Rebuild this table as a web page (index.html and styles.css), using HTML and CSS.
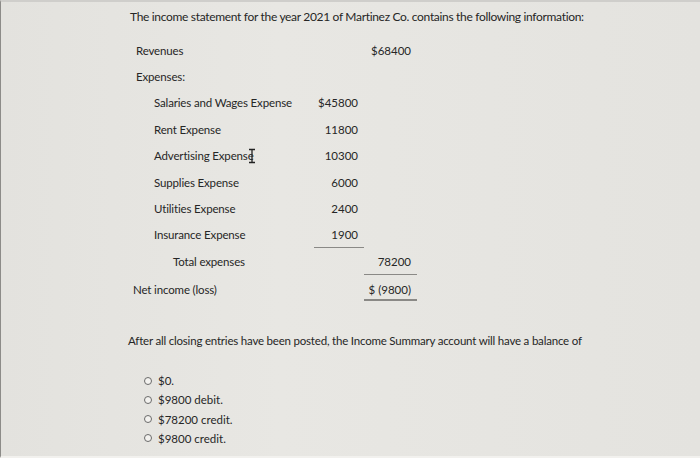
FILE: index.html
```html
<!DOCTYPE html>
<html>
<head>
<meta charset="utf-8">
<link rel="stylesheet" href="styles.css">
</head>
<body>
<div class="screen">
  <p class="title">The income statement for the year 2021 of Martinez Co. contains the following information:</p>
  <div class="stmt">
    <div class="row"><span class="lbl">Revenues</span><span class="a1"></span><span class="a2">$68400</span></div>
    <div class="row"><span class="lbl">Expenses:</span><span class="a1"></span><span class="a2"></span></div>
    <div class="row"><span class="lbl ind">Salaries and Wages Expense</span><span class="a1">$45800</span><span class="a2"></span></div>
    <div class="row"><span class="lbl ind">Rent Expense</span><span class="a1">11800</span><span class="a2"></span></div>
    <div class="row"><span class="lbl ind cursor-host">Advertising Expense<svg class="ibeam" width="8" height="16" viewBox="0 0 8 16"><path d="M1 1.5h6M4 1.5v13M1 14.5h6" stroke="#222" stroke-width="1.3" fill="none"/></svg></span><span class="a1">10300</span><span class="a2"></span></div>
    <div class="row"><span class="lbl ind">Supplies Expense</span><span class="a1">6000</span><span class="a2"></span></div>
    <div class="row"><span class="lbl ind">Utilities Expense</span><span class="a1">2400</span><span class="a2"></span></div>
    <div class="row"><span class="lbl ind">Insurance Expense</span><span class="a1 under">1900</span><span class="a2"></span></div>
    <div class="row"><span class="lbl ind2">Total expenses</span><span class="a1"></span><span class="a2 under">78200</span></div>
    <div class="row net"><span class="lbl out">Net income (loss)</span><span class="a1"></span><span class="a2 dbl">$ (9800)</span></div>
  </div>
  <p class="question">After all closing entries have been posted, the Income Summary account will have a balance of</p>
  <ul class="options">
    <li><span class="radio"></span>$0.</li>
    <li><span class="radio"></span>$9800 debit.</li>
    <li><span class="radio"></span>$78200 credit.</li>
    <li><span class="radio"></span>$9800 credit.</li>
  </ul>
</div>
</body>
</html>
```
FILE: styles.css
```css
html, body {
  margin: 0;
  padding: 0;
}
body {
  width: 700px;
  height: 458px;
  overflow: hidden;
  background: #e5e4e0;
  font-family: Lato, "Noto Sans", sans-serif;
  color: #262626;
}
.screen {
  box-sizing: border-box;
  width: 700px;
  height: 458px;
  border-left: 1px solid #8c8b88;
  border-top: 2px solid #cfcecb;
  border-bottom: 2px solid #f2f1ee;
  background: linear-gradient(90deg, #e3e2de 0%, #e8e7e3 40%, #e4e3df 100%);
  padding-left: 129px;
}
.title {
  margin: 0;
  padding-top: 7px;
  font-size: 12px;
  line-height: 16px;
  letter-spacing: -0.32px;
}
.stmt {
  margin-top: 12px;
  margin-left: 6px;
  display: grid;
  grid-template-columns: 178px 50px 53px;
  grid-auto-rows: 26.4px;
  font-size: 11.5px;
  letter-spacing: -0.15px;
}
.row {
  display: contents;
}
.row > span {
  display: flex;
  align-items: center;
  white-space: nowrap;
}
.row.net > span {
  padding-top: 3px;
}
.lbl.ind { padding-left: 18px; }
.lbl.ind2 { padding-left: 37px; }
.lbl.out { margin-left: -3px; }
.a1, .a2 {
  justify-content: flex-end;
  padding-right: 6px;
  letter-spacing: 0;
}
.under {
  box-shadow: inset 0 -1px 0 #8a8986;
}
.dbl {
  box-shadow: inset 0 -2px 0 #8a8986;
}
.cursor-host {
  position: relative;
}
.ibeam {
  position: absolute;
  left: 112px;
  top: 5px;
}
.question {
  margin: 32px 0 0 -2px;
  font-size: 11.5px;
  line-height: 16px;
  letter-spacing: -0.2px;
}
.options {
  list-style: none;
  margin: 22px 0 0 14px;
  padding: 0;
  font-size: 11.5px;
}
.options li {
  display: flex;
  align-items: center;
  height: 19.3px;
}
.radio {
  width: 8px;
  height: 8px;
  border: 1px solid #6a6a6a;
  border-radius: 50%;
  margin-right: 6px;
  box-sizing: border-box;
  background: #f3f2ef;
}
```
